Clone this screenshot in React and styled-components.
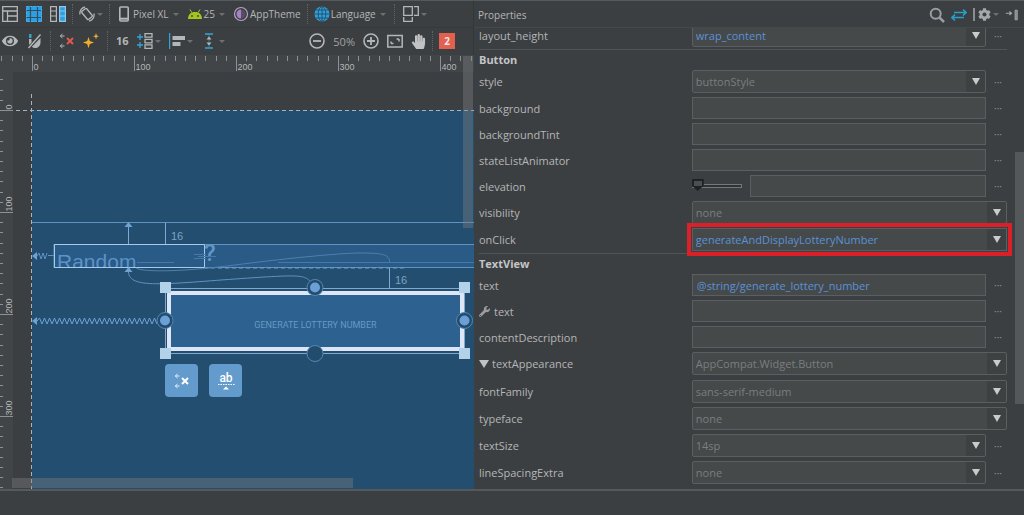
import React from 'react'
import styled, { createGlobalStyle, css } from 'styled-components'
import { FaCog, FaHandPaper, FaWrench, FaEye } from 'react-icons/fa'

const GlobalStyle = createGlobalStyle`
  *, *::before, *::after {
    box-sizing: border-box;
  }

  body {
    margin: 0;
    background: #3c3f41;
    color: #b4b6b8;
    font-family: 'Open Sans', 'Noto Sans', sans-serif;
    font-size: 11px;
  }

  button, input, select {
    font: inherit;
    color: inherit;
  }
`

const Page = styled.div`
  min-height: 100vh;
  display: flex;
  flex-direction: column;
  border-top: 1px solid #56595b;
`

const Workspace = styled.main`
  flex: 1;
  display: grid;
  grid-template-columns: minmax(0, 474fr) minmax(0, 550fr);
`

const StatusBar = styled.footer`
  height: 26px;
  border-top: 2px solid #56595b;
`

/* ---------- design editor ---------- */

const Editor = styled.section`
  display: flex;
  flex-direction: column;
`

const Toolbar = styled.div`
  height: 27px;
  display: flex;
  align-items: center;
  gap: 8px;
  padding: 0 18px 0 2px;
  border-bottom: 1px solid ${props => (props.$flat ? 'transparent' : '#363839')};
  border-right: 1px solid #343637;
`

const Separator = styled.span`
  width: 1px;
  height: 20px;
  margin: 0 ${props => (props.$tight ? '-2px' : '0')};
  border-left: 1px dotted #606365;
`

const ToolButton = styled.button`
  display: flex;
  align-items: center;
  flex: none;
  gap: 1px;
  padding: 0;
  border: 0;
  background: none;
  font-size: ${props => (props.$bold ? '11px' : '10px')};
  line-height: 16px;
  font-weight: ${props => (props.$bold ? 700 : 400)};
  white-space: nowrap;

  svg {
    display: block;
    flex: none;
  }
`

const ZoomTools = styled.div`
  display: flex;
  align-items: center;
  gap: 8px;
  margin-left: auto;
`

const ZoomLevel = styled.span`
  font-size: 11px;
  color: #a0a2a4;
`

const ErrorBadge = styled.button`
  width: 16px;
  height: 16px;
  padding: 0;
  border: 0;
  background: #e2604f;
  color: #f4e4e1;
  font-size: 10px;
  font-weight: 700;
  line-height: 16px;
`

const Caret = styled.span`
  margin-left: ${props => (props.$near ? '1px' : '3px')};
  border: 3px solid transparent;
  border-top-color: #6d7072;
  border-bottom: 0;
`

const Surface = styled.div`
  flex: 1;
  position: relative;
  display: grid;
  grid-template: 17px minmax(0, 1fr) / 13px minmax(0, 1fr);
  overflow: hidden;
`

const Ruler = styled.svg`
  display: block;
  width: 100%;
  height: 100%;
  background: #414547;
  font-family: 'Liberation Sans', sans-serif;
  font-size: 9px;

  line {
    stroke: #8e9193;
  }

  text {
    fill: #b4b6b8;
  }
`

const TopRuler = styled(Ruler)`
  grid-column: 1 / -1;
`

const Canvas = styled.div`
  position: relative;
  overflow: hidden;
`

const Layer = styled.svg`
  position: absolute;
  inset: 0;
  width: 100%;
  height: 100%;
  pointer-events: none;
  font-family: 'Liberation Sans', sans-serif;
`

const SelectedWidget = styled.button`
  position: absolute;
  left: 154px;
  top: 219px;
  width: 297px;
  height: 60px;
  padding: 7px 0 0;
  border: 4px solid #dde6f6;
  border-radius: 3px;
  background: #2d618f;
  color: #6799c5;
  font-family: Roboto, sans-serif;
  font-size: 9px;
`

const WidgetActions = styled.div`
  position: absolute;
  left: 152px;
  top: 292px;
  display: flex;
  gap: 11px;
`

const WidgetAction = styled.button`
  width: 33px;
  height: 33px;
  padding: 0;
  border: 0;
  border-radius: 4px;
  background: #649bcd;

  svg {
    display: block;
    margin: auto;
  }
`

const ScrollThumb = styled.span`
  position: absolute;
  background: rgba(125, 128, 130, 0.4);

  ${props =>
    props.$vertical
      ? css`
          top: 1px;
          right: 1px;
          width: 10px;
          height: 172px;
        `
      : css`
          left: 12px;
          bottom: 1px;
          width: 72%;
          height: 10px;
        `}
`

/* ---------- properties panel ---------- */

const Panel = styled.section`
  position: relative;
  display: flex;
  flex-direction: column;
`

const PanelHeader = styled.header`
  height: 27px;
  display: flex;
  align-items: center;
  gap: 6px;
  padding: 1px 5px 0 4px;
  border-bottom: 1px solid #46494b;
`

const PanelTitle = styled.h1`
  margin: 0 auto 0 0;
  font-size: 10px;
  font-weight: 400;
`

const HeaderTools = styled.div`
  display: flex;
  align-items: center;
  padding-left: 3px;
  border-left: 2px solid #8b8e90;
`

const Viewport = styled.div`
  overflow: hidden;
  padding: 0 17px 3px 5px;
`

/* the list is scrolled a little, so its first row slides under the header */
const PropertyList = styled.div`
  margin-top: -6px;
`

const ExpandedGroup = styled.div`
  padding-top: 1px;
`

const GroupTitle = styled.h2`
  height: 19px;
  margin: 0;
  border-top: 1px solid #515456;
  font-size: 11px;
  line-height: 20px;
  font-weight: 700;
  color: #c3c5c7;
`

const Row = styled.div`
  display: grid;
  grid-template-columns: minmax(0, 27fr) minmax(0, 40fr);
  padding: 2px 0;
`

const Label = styled.label`
  display: flex;
  align-items: center;
  gap: 4px;
`

const Value = styled.div`
  display: flex;
  align-items: center;
`

const MoreButton = styled.button`
  flex: none;
  width: 21px;
  padding: 0 0 0 3px;
  border: 0;
  background: none;
  font-size: 10px;
  line-height: 16px;
  color: #8e9193;
`

const TextField = styled.input`
  flex: 1;
  min-width: 0;
  height: 22px;
  padding: 0 4px;
  border: 1px solid #5c5f61;
  border-radius: 0;
  background: #45494a;
  color: #5c91d6;
  outline: none;
`

const Combo = styled.div`
  flex: 1;
  min-width: 0;
  display: grid;
  height: 23px;
  border: 1px solid #5c5f61;
  border-radius: 2px;
  background: linear-gradient(to left, #3e4142 19px, #45494a 19px);

  > * {
    grid-area: 1 / 1;
  }

  ${props =>
    props.$highlighted &&
    css`
      z-index: 1;
      border-radius: 0;
      outline: 4px solid #db2029;
      outline-offset: 1px;
    `}
`

const ComboSelect = styled.select`
  appearance: none;
  width: 100%;
  padding: 0 22px 0 3px;
  border: 0;
  background: none;
  color: ${props => (props.$set ? '#5c91d6' : '#7b7e80')};
  outline: none;
`

const ComboArrow = styled.span`
  place-self: center end;
  margin-right: 5px;
  border: 4px solid transparent;
  border-top: 7px solid #c9cbcc;
  border-bottom: 0;
  pointer-events: none;
`

const Expander = styled.span`
  margin-right: -1px;
  border: 5px solid transparent;
  border-top: 8px solid #c0c2c4;
  border-bottom: 0;
`

const Slider = styled.input`
  appearance: none;
  width: 50px;
  height: 16px;
  margin: 0 8px 0 0;
  background: none;

  &::-webkit-slider-runnable-track {
    height: 4px;
    border: 1px solid #75787a;
    border-left: 0;
    background: #303234;
  }

  &::-webkit-slider-thumb {
    appearance: none;
    width: 12px;
    height: 12px;
    margin-top: -6px;
    background: linear-gradient(#4c4f51, #4c4f51) 50% 2px / 8px 5px no-repeat #1f2122;
    clip-path: polygon(0 0, 100% 0, 100% 55%, 50% 100%, 0 55%);
  }
`

const PanelThumb = styled.span`
  position: absolute;
  right: 0;
  top: 31%;
  width: 9px;
  height: 252px;
  background: #55585a;
`

/* ---------- icons ---------- */

const Icon = ({ children, size = 16, ...rest }) => (
  <svg width={size} height={size} viewBox="0 0 16 16" fill="none" stroke="#b4b6b8" {...rest}>
    {children}
  </svg>
)

const DesignIcon = () => (
  <Icon strokeWidth="1.3">
    <path d="M.7.7h14.6v14.6H.7zM.7 5h14.6M5.5 5v10.3M5.5 10h9.8" />
  </Icon>
)

const BlueprintIcon = () => (
  <Icon stroke="#2a4f66">
    <rect x="0" y="0" width="16" height="16" fill="#2f9fe0" stroke="none" />
    <path d="M4.5 0v16M11.5 0v16M0 4.5h16M0 11.5h16" strokeWidth="1.2" />
    <path d="M.5.5h15v15H.5z" stroke="#45b0ea" strokeDasharray="2 1.5" />
  </Icon>
)

const BothIcon = () => (
  <Icon strokeWidth="1.2">
    <path d="M.6.6h5.8v14.8H.6zM.6 5h5.8M.6 10h5.8" />
    <rect x="9" y="0" width="7" height="16" fill="#2f9fe0" stroke="none" />
    <path d="M9.6.6h5.8v14.8H9.6zM9 5h7M9 10h7" stroke="#8ec7ea" />
  </Icon>
)

const RotateIcon = () => (
  <Icon strokeWidth="1.3">
    <rect x="4.9" y="2.8" width="6.2" height="10.400" rx="1" transform="rotate(-40 8 8)" />
    <path d="M.9 8.500C.6 5 2.500 2 6 .9M3.500 14.500M15.100 7.500c.3 3.500-1.600 6.500-5.100 7.600" />
  </Icon>
)

const PhoneIcon = () => (
  <Icon>
    <rect x="3.800" y="1" width="8.400" height="14" rx="1" strokeWidth="1.600" />
    <path d="M4 12.700h8" strokeWidth="2" />
  </Icon>
)

const AndroidIcon = () => (
  <Icon stroke="#a4c639">
    <path d="M1 13c0-4.500 3-7 7-7s7 2.500 7 7z" fill="#a4c51a" stroke="none" />
    <path d="M3 3.500l2 3.200M13 3.500l-2 3.200" />
    <circle cx="5" cy="10" r=".9" fill="#3c3f41" stroke="none" />
    <circle cx="11" cy="10" r=".9" fill="#3c3f41" stroke="none" />
  </Icon>
)

const ThemeIcon = () => (
  <Icon>
    <circle cx="8" cy="8" r="6.500" stroke="#b6a3c6" strokeWidth="1.200" />
    <path d="M8 3.500a4.500 4.500 0 0 0 0 9z" fill="#a583c0" stroke="none" />
    <path d="M8 3.500a4.500 4.500 0 0 1 0 9z" fill="#5b4a68" stroke="none" />
  </Icon>
)

const GlobeIcon = () => (
  <Icon stroke="#27536d">
    <circle cx="8" cy="8" r="7.500" fill="#2fa0dd" stroke="none" />
    <path d="M8 .5v15M.5 8h15M2 4h12M2 12h12" />
    <ellipse cx="8" cy="8" rx="3.800" ry="7.300" />
  </Icon>
)

const VariantsIcon = () => (
  <Icon strokeWidth="1.300">
    <path d="M.7.7h8.600v8.600H.7zM11 .7h4.300v8.600H11M.7 11v4.300h8.600V11" />
  </Icon>
)

const AutoConnectIcon = () => (
  <Icon stroke="none">
    <path d="M3 6h2.500v3.500L3.500 12C3.200 11 3 10 3 9z" fill="#b4b6b8" />
    <path d="M3 1h2.500v4H3z" fill="#34a3c9" />
    <path d="M14.500 5v4c0 4-2.500 6-5.500 6-1.200 0-2.300-.4-3.200-1.200z" fill="#b4b6b8" />
    <path d="M2.500 15L14.500 1.500" stroke="#b4b6b8" strokeWidth="1.400" />
  </Icon>
)

const ClearIcon = ({ cross = '#dd5a50', ...rest }) => (
  <Icon {...rest}>
    <path d="M5.500 3H1.500M3.500 1L1.200 3l2.300 2M5.500 13H1.500M3.500 11l-2.300 2 2.300 2" />
    <path d="M8 5l6 6M14 5l-6 6" stroke={cross} strokeWidth="2" />
  </Icon>
)

const InferIcon = () => (
  <Icon stroke="none">
    <path d="M5.500 4l1.300 4 4.200 1.500-4.200 1.500-1.300 4.300-1.300-4.300L0 9.500 4.200 8z" fill="#f2ae2b" />
    <path d="M13 0l.8 2.400 2.200.8-2.200.8L13 6.400 12.200 4 10 3.200l2.200-.8z" fill="#f2ae2b" />
  </Icon>
)

const PackIcon = () => (
  <Icon strokeWidth="1.300">
    <path d="M8 .7h7v3.500H8zM8 6.300h7v3.500H8zM8 11.800h7v3.500H8z" />
    <path d="M0 4h6M3 1v6M0 12h6M3 9v6" stroke="#34a3dc" />
  </Icon>
)

const AlignIcon = () => (
  <Icon stroke="none">
    <path d="M0 0h1.200v16H0z" fill="#34a3dc" />
    <path d="M3.500 3h12.500v4H3.500zM3.500 9h8v4h-8z" fill="#b4b6b8" />
  </Icon>
)

const GuidelineIcon = () => (
  <Icon stroke="#34a3dc">
    <path d="M4 1h8M4 15h8" strokeWidth="1.300" />
    <path d="M8 1.500v13" strokeDasharray="1 1" />
    <path d="M5.500 6.500L8 3.500l2.500 3zM5.500 9.500L8 12.500l2.500-3z" fill="#b4b6b8" stroke="none" />
  </Icon>
)

const ZoomIcon = ({ plus }) => (
  <Icon>
    <circle cx="8" cy="8" r="7" strokeWidth="1.600" />
    <path d={plus ? 'M4 8h8M8 4v8' : 'M4 8h8'} strokeWidth="1.800" />
  </Icon>
)

const FitIcon = () => (
  <Icon>
    <path d="M.8 2.500h14.400v11.500H.8z" strokeWidth="1.500" />
    <path d="M4 10.500v-2M4 10.500h2.500M12 6v2.500M12 6H9.500" strokeWidth="1.500" />
  </Icon>
)

const SearchIcon = () => (
  <Icon stroke="#9b9ea0" strokeWidth="2">
    <circle cx="6.700" cy="6.700" r="5" />
    <path d="M10.300 10.300L15 15" strokeWidth="2.500" />
  </Icon>
)

const SwapIcon = () => (
  <Icon stroke="#27a0cc" strokeWidth="1.600">
    <path d="M3 5.500h12M12 2.500l3 3-3 3" />
    <path d="M13 10.500H1M4 7.500l-3 3 3 3" />
  </Icon>
)

const HideIcon = () => (
  <Icon size={14} stroke="#a5a8aa">
    <path d="M1 6h6M5 4l2.500 2L5 8" strokeWidth="1.300" />
    <path d="M11.500 2.500h2.500v11h-2.500z" fill="#85888a" />
  </Icon>
)

const BaselineIcon = () => (
  <svg width="20" height="20" viewBox="0 0 20 20">
    <text x="10" y="11" textAnchor="middle" fontFamily="Roboto, sans-serif" fontSize="12" fontWeight="500" fill="#fff">
      ab
    </text>
    <path d="M2 13.500h17" stroke="#fff" strokeDasharray="1.500 1" />
    <path d="M7 18.500l3-3 3 3z" fill="#fff" />
  </svg>
)

/* ---------- rulers and blueprint ---------- */

const STEP = 10.2
const makeTicks = last => Array.from({ length: last + 4 }, (_, i) => i - 3)

const HorizontalRuler = () => (
  <TopRuler>
    {makeTicks(43).map(i => {
      const x = Math.round(32 + i * STEP) + 0.5
      const major = i % 10 === 0
      return (
        <g key={i}>
          <line x1={x} x2={x} y1="1" y2={major ? 16 : 6} />
          {major && <text x={x + 1} y="15">{i * 10}</text>}
        </g>
      )
    })}
  </TopRuler>
)

const VerticalRuler = () => (
  <Ruler>
    {makeTicks(39).map(i => {
      const y = Math.round(38 + i * STEP) + 0.5
      const major = i % 10 === 0
      return (
        <g key={i}>
          <line x1="0" x2={major ? 13 : 3} y1={y} y2={y} />
          {major && <text transform={`translate(12 ${y - 1}) rotate(-90)`}>{i * 10}</text>}
        </g>
      )
    })}
  </Ruler>
)

const zigzag = (from, to, y, step, height) => {
  let d = `M${from} ${y}`
  let up = true
  for (let x = from + step; x <= to; x += step) {
    d += `L${x} ${up ? y - height : y + height}`
    up = !up
  }
  return d
}

const Handle = ({ x, y, connected }) => (
  <g>
    <circle cx={x} cy={y} r="8" fill="#224b6c" stroke="#5688b5" />
    {connected && <circle cx={x} cy={y} r="5" fill="#6aa0d6" />}
  </g>
)

const Blueprint = () => (
  <Layer fill="none" stroke="#5f92c0">
    <defs>
      <clipPath id="titleClip">
        <rect x="54" y="244" width="150" height="23" />
      </clipPath>
    </defs>
    <g transform="translate(-13 -72)">
      <rect x="32" y="110" width="3000" height="3000" fill="#234e6f" stroke="none" />
      <path d="M16 110.500H3000M31.500 94V3000" stroke="#a3b4c0" strokeDasharray="4 3" />

      <path d="M32 222.500H3000" />
      <rect x="54" y="244.500" width="3000" height="23" fill="#2a5a86" />
      <path d="M54.500 244.500h150v23h-150z" stroke="#a5cbea" />
      <g clipPath="url(#titleClip)">
        <text x="57" y="269" fontSize="21" fill="#5c93c8" stroke="none">Random</text>
      </g>
      <path d="M137 262.500h37M194 254.500h12M198 256.500h18M194 258.500h12M278 262.500H3000" stroke="#4479a9" />
      <text x="204" y="261" fontSize="24" fontFamily="Roboto, sans-serif" fontWeight="500" fill="#6297ca" stroke="none">?</text>
      <path d="M204 268h203" stroke="#6f9cc4" strokeDasharray="4 3" />

      <path d="M128.500 244v-18M165.500 222.500V244M389.500 268v20" stroke="#7fa9cf" />
      <path d="M124.500 227l4-5 4 5zM124.500 272l4-5 4 5zM32 256l5-4v8zM32 321l5-4v8z" fill="#6da2d4" stroke="none" />
      <text x="171" y="240" fontSize="11" fill="#7da3c6" stroke="none">16</text>
      <text x="395" y="284" fontSize="11" fill="#7da3c6" stroke="none">16</text>

      <path d={zigzag(37, 48, 256, 2, 3)} />
      <path d="M48 255.500h6" />
      <path d={zigzag(37, 158, 321, 2.5, 3)} stroke="#6da2d4" />
      <path d="M128.500 272C129 289 165 284 235 279S304 275 312 283" />
      <path d="M136 268C145 273 190 271 235 265S340 253 360 253S390 254 389.500 262" stroke="#4d80b0" />
    </g>
  </Layer>
)

const SelectionHandles = () => (
  <Layer fill="none">
    <g transform="translate(-13 -72)">
      <path d="M165.500 288.500h299v65h-299z" stroke="#7fa9cf" />
      <g fill="#b2d2ea">
        <rect x="160" y="282" width="11" height="11" />
        <rect x="459" y="282" width="11" height="11" />
        <rect x="160" y="348" width="11" height="11" />
        <rect x="459" y="348" width="11" height="11" />
      </g>
      <Handle x={165} y={320.5} connected />
      <Handle x={315} y={287.5} connected />
      <Handle x={464.5} y={320.5} connected />
      <Handle x={315} y={353.5} />
    </g>
  </Layer>
)

/* ---------- property rows ---------- */

const TextRow = ({ id, label, value = '', icon, slider }) => (
  <Row>
    <Label htmlFor={id}>
      {icon}
      {label}
    </Label>
    <Value>
      {slider && <Slider type="range" defaultValue="0" aria-label={label} />}
      <TextField id={id} type="text" defaultValue={value} />
      <MoreButton>···</MoreButton>
    </Value>
  </Row>
)

const ComboRow = ({ id, label, value, set, more, expandable, highlighted }) => (
  <Row>
    <Label htmlFor={id}>
      {expandable && <Expander />}
      {label}
    </Label>
    <Value>
      <Combo $highlighted={highlighted}>
        <ComboSelect id={id} $set={set} defaultValue={value}>
          <option>{value}</option>
        </ComboSelect>
        <ComboArrow />
      </Combo>
      {more && <MoreButton>···</MoreButton>}
    </Value>
  </Row>
)

const PropertiesPanel = () => (
  <Panel>
    <PanelHeader>
      <PanelTitle>Properties</PanelTitle>
      <ToolButton aria-label="Search"><SearchIcon /></ToolButton>
      <ToolButton aria-label="Switch view"><SwapIcon /></ToolButton>
      <HeaderTools>
        <ToolButton aria-label="Settings">
          <FaCog size={13} color="#a5a8aa" />
          <Caret $near />
        </ToolButton>
      </HeaderTools>
      <ToolButton aria-label="Hide"><HideIcon /></ToolButton>
    </PanelHeader>
    <Viewport>
      <PropertyList>
        <ComboRow id="layoutHeight" label="layout_height" value="wrap_content" set more />
        <GroupTitle>Button</GroupTitle>
        <ComboRow id="style" label="style" value="buttonStyle" more />
        <TextRow id="background" label="background" />
        <TextRow id="backgroundTint" label="backgroundTint" />
        <TextRow id="stateListAnimator" label="stateListAnimator" />
        <TextRow id="elevation" label="elevation" slider />
        <ComboRow id="visibility" label="visibility" value="none" />
        <ComboRow id="onClick" label="onClick" value="generateAndDisplayLotteryNumber" set highlighted />
        <GroupTitle>TextView</GroupTitle>
        <TextRow id="text" label="text" value="@string/generate_lottery_number" />
        <TextRow id="toolsText" label="text" icon={<FaWrench size={11} color="#9b9ea0" />} />
        <TextRow id="contentDescription" label="contentDescription" />
        <ComboRow id="textAppearance" label="textAppearance" value="AppCompat.Widget.Button" expandable />
        <ExpandedGroup>
          <ComboRow id="fontFamily" label="fontFamily" value="sans-serif-medium" />
          <ComboRow id="typeface" label="typeface" value="none" />
          <ComboRow id="textSize" label="textSize" value="14sp" more />
          <ComboRow id="lineSpacingExtra" label="lineSpacingExtra" value="none" more />
        </ExpandedGroup>
      </PropertyList>
    </Viewport>
    <PanelThumb />
  </Panel>
)

const DesignEditor = () => (
  <Editor>
    <Toolbar>
      <ToolButton aria-label="Design"><DesignIcon /></ToolButton>
      <ToolButton aria-label="Blueprint"><BlueprintIcon /></ToolButton>
      <ToolButton aria-label="Design and blueprint"><BothIcon /></ToolButton>
      <Separator $tight />
      <ToolButton aria-label="Orientation"><RotateIcon /><Caret $near /></ToolButton>
      <Separator $tight />
      <ToolButton><PhoneIcon />Pixel XL<Caret /></ToolButton>
      <ToolButton><AndroidIcon />25<Caret /></ToolButton>
      <ToolButton><ThemeIcon />AppTheme</ToolButton>
      <Separator $tight />
      <ToolButton><GlobeIcon />Language<Caret /></ToolButton>
      <Separator />
      <ToolButton aria-label="Layout variants"><VariantsIcon /><Caret $near /></ToolButton>
    </Toolbar>
    <Toolbar $flat>
      <ToolButton aria-label="Show constraints"><FaEye size={16} color="#b4b6b8" /></ToolButton>
      <ToolButton aria-label="Autoconnect"><AutoConnectIcon /></ToolButton>
      <Separator />
      <ToolButton aria-label="Clear constraints"><ClearIcon /></ToolButton>
      <ToolButton aria-label="Infer constraints"><InferIcon /></ToolButton>
      <Separator />
      <ToolButton $bold>16</ToolButton>
      <ToolButton aria-label="Pack"><PackIcon /><Caret $near /></ToolButton>
      <ToolButton aria-label="Align"><AlignIcon /><Caret $near /></ToolButton>
      <ToolButton aria-label="Guidelines"><GuidelineIcon /><Caret $near /></ToolButton>
      <ZoomTools>
        <ToolButton aria-label="Zoom out"><ZoomIcon /></ToolButton>
        <ZoomLevel>50%</ZoomLevel>
        <ToolButton aria-label="Zoom in"><ZoomIcon plus /></ToolButton>
        <ToolButton aria-label="Zoom to fit"><FitIcon /></ToolButton>
        <ToolButton aria-label="Pan"><FaHandPaper size={15} color="#c0c2c4" /></ToolButton>
        <Separator $tight />
        <ErrorBadge>2</ErrorBadge>
      </ZoomTools>
    </Toolbar>
    <Surface>
      <HorizontalRuler />
      <VerticalRuler />
      <Canvas>
        <Blueprint />
        <SelectedWidget>GENERATE LOTTERY NUMBER</SelectedWidget>
        <SelectionHandles />
        <WidgetActions>
          <WidgetAction aria-label="Clear constraints"><ClearIcon stroke="#e6effa" cross="#fff" /></WidgetAction>
          <WidgetAction aria-label="Edit baseline"><BaselineIcon /></WidgetAction>
        </WidgetActions>
      </Canvas>
      <ScrollThumb $vertical />
      <ScrollThumb />
    </Surface>
  </Editor>
)

const App = () => {
  return (
    <Page>
      <GlobalStyle />
      <Workspace>
        <DesignEditor />
        <PropertiesPanel />
      </Workspace>
      <StatusBar />
    </Page>
  )
}

export default App
